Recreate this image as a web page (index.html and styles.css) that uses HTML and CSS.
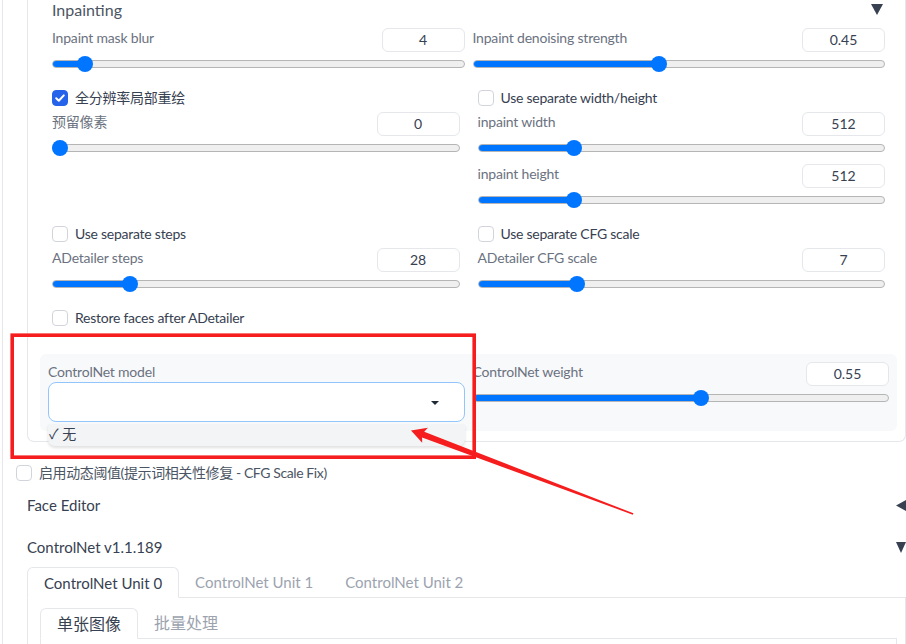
FILE: index.html
```html
<!DOCTYPE html>
<html lang="zh">
<head>
<meta charset="utf-8">
<title>Inpainting</title>
<link rel="stylesheet" href="styles.css">
</head>
<body>
<div class="page">
  <div class="panel">
    <div class="inner">
      <div class="acc-head">
        <span class="acc-title">Inpainting</span>
        <svg class="tri-down" width="12" height="11" viewBox="0 0 12 11"><polygon points="0,0 12,0 6,11" fill="#374151"/></svg>
      </div>

      <div class="row row-tight">
        <div class="col">
          <div class="field">
            <div class="field-head"><span class="lbl">Inpaint mask blur</span><span class="num">4</span></div>
            <div class="slider"><div class="track"><div class="fill" style="width:8%"></div></div><div class="thumb" style="left:8%"></div></div>
          </div>
        </div>
        <div class="col">
          <div class="field">
            <div class="field-head"><span class="lbl">Inpaint denoising strength</span><span class="num">0.45</span></div>
            <div class="slider"><div class="track"><div class="fill" style="width:45.1%"></div></div><div class="thumb" style="left:45.1%"></div></div>
          </div>
        </div>
      </div>

      <div class="row row-wide">
        <div class="col">
          <label class="check"><span class="box checked"><svg width="16" height="16" viewBox="0 0 16 16"><polyline points="4.2,8.3 6.8,10.8 11.8,5.4" fill="none" stroke="#fff" stroke-width="2" stroke-linecap="round" stroke-linejoin="round"/></svg></span><span class="check-text">全分辨率局部重绘</span></label>
          <div class="field">
            <div class="field-head"><span class="lbl">预留像素</span><span class="num">0</span></div>
            <div class="slider"><div class="track"><div class="fill" style="width:2%"></div></div><div class="thumb" style="left:2%"></div></div>
          </div>
        </div>
        <div class="col">
          <label class="check"><span class="box"></span><span class="check-text">Use separate width/height</span></label>
          <div class="field">
            <div class="field-head"><span class="lbl">inpaint width</span><span class="num">512</span></div>
            <div class="slider"><div class="track"><div class="fill" style="width:23.6%"></div></div><div class="thumb" style="left:23.6%"></div></div>
          </div>
          <div class="field field-next">
            <div class="field-head"><span class="lbl">inpaint height</span><span class="num">512</span></div>
            <div class="slider"><div class="track"><div class="fill" style="width:23.6%"></div></div><div class="thumb" style="left:23.6%"></div></div>
          </div>
        </div>
      </div>

      <div class="row row-wide">
        <div class="col">
          <label class="check"><span class="box"></span><span class="check-text">Use separate steps</span></label>
          <div class="field">
            <div class="field-head"><span class="lbl">ADetailer steps</span><span class="num">28</span></div>
            <div class="slider"><div class="track"><div class="fill" style="width:19.2%"></div></div><div class="thumb" style="left:19.2%"></div></div>
          </div>
        </div>
        <div class="col">
          <label class="check"><span class="box"></span><span class="check-text">Use separate CFG scale</span></label>
          <div class="field">
            <div class="field-head"><span class="lbl">ADetailer CFG scale</span><span class="num">7</span></div>
            <div class="slider"><div class="track"><div class="fill" style="width:24.3%"></div></div><div class="thumb" style="left:24.3%"></div></div>
          </div>
        </div>
      </div>

      <label class="check check-last"><span class="box"></span><span class="check-text">Restore faces after ADetailer</span></label>
    </div>

    <div class="cn-box">
      <div class="cn-col">
        <div class="lbl cn-lbl">ControlNet model</div>
        <div class="select">
          <span class="caret"></span>
          <div class="options"><span class="opt">✓ 无</span></div>
        </div>
      </div>
      <div class="cn-col">
        <div class="field">
          <div class="field-head"><span class="lbl">ControlNet weight</span><span class="num">0.55</span></div>
          <div class="slider"><div class="track"><div class="fill" style="width:54.8%"></div></div><div class="thumb" style="left:54.8%"></div></div>
        </div>
      </div>
    </div>
  </div>

  <label class="check outer-check"><span class="box"></span><span class="check-text">启用动态阈值(提示词相关性修复 - CFG Scale Fix)</span></label>

  <div class="acc-row acc-face">
    <span class="acc-name">Face Editor</span>
    <svg width="10" height="11" viewBox="0 0 10 11"><polygon points="0,5.5 10,0 10,11" fill="#374151"/></svg>
  </div>
  <div class="acc-row acc-cn">
    <span class="acc-name">ControlNet v1.1.189</span>
    <svg width="10" height="11" viewBox="0 0 10 11"><polygon points="0,0 10,0 5,11" fill="#374151"/></svg>
  </div>

  <div class="tabs">
    <div class="tab-bar">
      <span class="tab active">ControlNet Unit 0</span>
      <span class="tab">ControlNet Unit 1</span>
      <span class="tab">ControlNet Unit 2</span>
      <span class="tab-rest"></span>
    </div>
    <div class="tab-body">
      <div class="tab-bar inner-bar">
        <span class="tab active">单张图像</span>
        <span class="tab">批量处理</span>
        <span class="tab-rest"></span>
      </div>
      <div class="inner-body"></div>
    </div>
  </div>
</div>

<svg class="annot" width="906" height="644" viewBox="0 0 906 644">
  <rect x="12.2" y="335.2" width="462" height="122" fill="none" stroke="#f51d1d" stroke-width="3.6"/>
  <polygon points="411,430.5 427.9,427.8 424.2,431.8 633.4,513.3 632.8,514.7 422.1,437.4 422.2,442.8" fill="#f51d1d"/>
</svg>
</body>
</html>
```

FILE: styles.css
```css
* { box-sizing: border-box; }

html, body {
  margin: 0;
  padding: 0;
  background: #ffffff;
}

body {
  width: 906px;
  height: 644px;
  overflow: hidden;
  position: relative;
  font-family: Lato, "Noto Sans CJK SC", sans-serif;
  color: #374151;
}

.page {
  margin-left: 2px;
  border-left: 1px solid #e5e7eb;
  height: 644px;
}

/* Inner accordion panel */
.panel {
  margin-left: 24px;
  border-left: 1px solid #e5e7eb;
  border-right: 1px solid #e5e7eb;
  border-bottom: 1px solid #e5e7eb;
  border-bottom-left-radius: 7px;
  border-bottom-right-radius: 7px;
  padding-bottom: 10px;
}

.inner {
  padding-left: 24px;
  padding-right: 20px;
}

.acc-head {
  height: 20px;
  display: flex;
  align-items: center;
  justify-content: space-between;
}

.acc-title {
  font-size: 16px;
  color: #4b5563;
  line-height: 20px;
}

.tri-down { margin-right: 2px; margin-top: -1px; }

.row {
  display: flex;
}

.row-tight { gap: 8px; margin-top: 8px; }
.row-wide { gap: 18px; margin-top: 16px; }

.col {
  flex: 1 1 0;
  min-width: 0;
  display: flex;
  flex-direction: column;
}

.field { display: flex; flex-direction: column; }
.check + .field { margin-top: 4px; }
.field-next { margin-top: 8px; }

.field-head {
  display: flex;
  justify-content: space-between;
  align-items: flex-start;
  height: 24px;
}

.lbl {
  font-size: 14px;
  line-height: 20px;
  color: #6b7280;
  letter-spacing: -0.2px;
}

.num {
  width: 83px;
  height: 24px;
  border: 1px solid #e5e7eb;
  border-radius: 6px;
  background: #fff;
  text-align: center;
  font-size: 14px;
  line-height: 22px;
  color: #374151;
}

.slider {
  position: relative;
  height: 16px;
  margin-top: 4px;
  display: flex;
  align-items: center;
}

.track {
  position: relative;
  flex: 1;
  height: 8px;
  border-radius: 4px;
  background: #efefef;
  border: 1px solid #b5b5b5;
  overflow: hidden;
}

.fill {
  position: absolute;
  left: 0;
  top: -1px;
  bottom: -1px;
  background: #0075ff;
}

.thumb {
  position: absolute;
  top: 0;
  width: 16px;
  height: 16px;
  margin-left: -8px;
  border-radius: 50%;
  background: #0075ff;
}

/* Checkboxes */
.check {
  display: flex;
  align-items: center;
  height: 20px;
  gap: 7px;
}

.box {
  width: 16px;
  height: 16px;
  flex: none;
  border: 1px solid #d1d5db;
  border-radius: 4px;
  background: #fff;
  display: block;
}

.box.checked {
  background: #2563eb;
  border-color: #2563eb;
  position: relative;
}

.box.checked svg {
  position: absolute;
  left: -1px;
  top: -1px;
}

.check-text {
  font-size: 14px;
  line-height: 20px;
  color: #374151;
  letter-spacing: -0.25px;
}

.check-last { margin-top: 16px; }

/* ControlNet box */
.cn-box {
  margin: 26px 8px 0 12px;
  background: #f8f9fb;
  border-radius: 6px;
  padding: 8px 8px 9px 8px;
  display: flex;
  gap: 8px;
}

.cn-col { flex: 1 1 0; min-width: 0; }

.cn-lbl { display: block; height: 20px; }

.select {
  position: relative;
  height: 40px;
  border: 1px solid #93c5fd;
  border-radius: 8px;
  background: #fff;
}

.caret {
  position: absolute;
  right: 25px;
  top: 18px;
  width: 0;
  height: 0;
  border-left: 4px solid transparent;
  border-right: 4px solid transparent;
  border-top: 4px solid #1f2937;
}

.options {
  position: absolute;
  left: -1px;
  right: -1px;
  top: 41px;
  height: 22px;
  background: #f3f4f6;
  border-radius: 0 0 7px 7px;
  box-shadow: 0 2px 3px rgba(0,0,0,0.12);
  z-index: 2;
}

.opt {
  display: block;
  padding-left: 1px;
  font-size: 14px;
  line-height: 20px;
  color: #374151;
}

/* below panel */
.outer-check {
  margin-top: 21px;
  margin-left: 13px;
  gap: 7px;
}

.outer-check .check-text { font-size: 14px; color: #4b5563; letter-spacing: -0.4px; }

.acc-row {
  margin-left: 24px;
  height: 24px;
  display: flex;
  align-items: center;
  justify-content: space-between;
}

.acc-face { margin-top: 10px; }
.acc-cn { margin-top: 18px; }

.acc-name {
  font-size: 15px;
  line-height: 24px;
  color: #374151;
}

/* tabs */
.tabs {
  margin-left: 24px;
  margin-top: 8px;
}

.tab-bar {
  display: flex;
  height: 31px;
}

.tab {
  padding: 0 16px;
  font-size: 15px;
  line-height: 30px;
  color: #9ca3af;
  border-bottom: 1px solid #e5e7eb;
  white-space: nowrap;
}

.tab.active {
  color: #374151;
  border: 1px solid #e5e7eb;
  border-bottom-color: transparent;
  border-radius: 6px 6px 0 0;
  background: #fff;
}

.tab-rest {
  flex: 1;
  border-bottom: 1px solid #e5e7eb;
}

.tab-body {
  border-left: 1px solid #e5e7eb;
  border-right: 1px solid #e5e7eb;
  padding: 10px 8px 0 12px;
  height: 60px;
}

.inner-bar .tab {
  font-size: 16px;
  line-height: 30px;
}

.inner-body {
  height: 20px;
  border-left: 1px solid #e5e7eb;
  border-right: 1px solid #e5e7eb;
}

.annot {
  position: absolute;
  left: 0;
  top: 0;
  z-index: 10;
  pointer-events: none;
}
```
